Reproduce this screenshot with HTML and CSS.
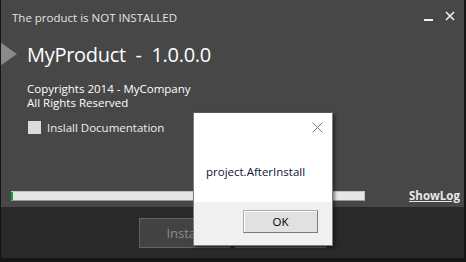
FILE: index.html
```html
<!DOCTYPE html>
<html lang="en">
<head>
    <meta charset="UTF-8">
    <title>MyProduct Setup</title>
    <link rel="stylesheet" href="styles.css">
</head>
<body>
    <div class="window">
        <!-- Main panel -->
        <div class="top">
            <div class="titlebar">
                <span class="title">The product is NOT INSTALLED</span>
                <div class="controls">
                    <span class="min"></span>
                    <svg class="close" width="10" height="10" viewBox="0 0 10 10">
                        <path d="M1 1L9 9M9 1L1 9" stroke="#f2f2f2" stroke-width="1.6"/>
                    </svg>
                </div>
            </div>

            <div class="product">
                <span class="arrow"></span>
                <h1>MyProduct  -  1.0.0.0</h1>
            </div>

            <div class="copy">
                <p>Copyrights 2014 - MyCompany</p>
                <p>All Rights Reserved</p>
            </div>

            <label class="check">
                <span class="box"></span>
                <span>Inslall Documentation</span>
            </label>

            <div class="progress-row">
                <div class="progress"><div class="progress-fill"></div></div>
                <a class="showlog" href="#">ShowLog</a>
            </div>
        </div>

        <!-- Buttons -->
        <div class="bottom">
            <button class="btn">Install</button>
            <button class="btn">Cancel</button>
        </div>

        <!-- Message box -->
        <div class="dialog">
            <div class="dialog-body">
                <svg class="dialog-close" width="11" height="11" viewBox="0 0 11 11">
                    <path d="M0.5 0.5L10.5 10.5M10.5 0.5L0.5 10.5" stroke="#7a7a7a" stroke-width="1"/>
                </svg>
                <p class="message">project.AfterInstall</p>
            </div>
            <div class="dialog-foot">
                <button class="ok">OK</button>
            </div>
        </div>
    </div>
</body>
</html>
```

FILE: styles.css
```css
/* General styles */
body {
    margin: 0;
    background-color: #151515;
    font-family: "Open Sans", "Noto Sans", sans-serif;
}
.window {
    position: relative;
    width: 463px;
    height: 258px;
    margin-left: 1px;
    display: flex;
    flex-direction: column;
    overflow: hidden;
}

/* Main panel */
.top {
    height: 207px;
    background-color: #474747;
    color: #ffffff;
    display: flex;
    flex-direction: column;
}
.titlebar {
    display: flex;
    justify-content: space-between;
    padding: 9px 9px 0 11px;
    height: 21px;
}
.title {
    font-size: 11.5px;
    color: #e4e4e4;
    line-height: 18px;
}
.controls {
    display: flex;
    align-items: flex-start;
    gap: 12px;
    padding-top: 2px;
}
.min {
    width: 9px;
    height: 2px;
    margin-top: 8px;
    background-color: #f2f2f2;
}
.product {
    display: flex;
    align-items: center;
    height: 26px;
    margin-top: 11px;
}
.arrow {
    width: 0;
    height: 0;
    margin-left: -1px;
    border-top: 12px solid transparent;
    border-bottom: 12px solid transparent;
    border-left: 17px solid #8a8a8a;
}
.product h1 {
    margin: 0 0 0 10px;
    font-size: 20px;
    font-weight: normal;
    white-space: pre;
    letter-spacing: -0.3px;
}
.copy {
    margin: 15px 0 0 26px;
    font-size: 11.5px;
    line-height: 14px;
}
.copy p {
    margin: 0;
}
.check {
    display: flex;
    align-items: center;
    margin: 10px 0 0 27px;
    font-size: 11.5px;
    color: #f0f0f0;
    gap: 6px;
}
.box {
    width: 13px;
    height: 13px;
    background-color: #dcdcdc;
}
.progress-row {
    display: flex;
    align-items: center;
    margin: auto 4px 4px 10px;
}
.progress {
    width: 353px;
    height: 8px;
    background-color: #e6e6e6;
    border: 1px solid #c2c2c2;
    border-bottom-color: #9a9a9a;
    border-left: none;
}
.progress-fill {
    width: 2px;
    height: 100%;
    background-color: #06b025;
}
.showlog {
    margin-left: auto;
    font-size: 11.5px;
    font-weight: bold;
    color: #e8e8e8;
    text-decoration: underline;
}

/* Bottom buttons */
.bottom {
    flex: 1;
    background-color: #292929;
    display: flex;
    justify-content: center;
    align-items: flex-start;
    gap: 5px;
    padding-top: 11px;
}
.btn {
    width: 91px;
    height: 30px;
    background-color: #434343;
    border: 1px solid #626262;
    color: #8c8c8c;
    font-family: "Open Sans", sans-serif;
    font-size: 13px;
}

/* Message box */
.dialog {
    position: absolute;
    left: 192px;
    top: 112px;
    width: 138px;
    height: 132px;
    border: 1px solid #7f7f7f;
    border-top-color: #5a5a5a;
    box-shadow: 2px 2px 3px rgba(0, 0, 0, 0.45);
    display: flex;
    flex-direction: column;
    font-family: "Open Sans", sans-serif;
}
.dialog-body {
    position: relative;
    height: 89px;
    background-color: #ffffff;
}
.dialog-close {
    position: absolute;
    right: 9px;
    top: 9px;
}
.message {
    margin: 51px 0 0 12px;
    font-size: 11.5px;
    color: #111133;
}
.dialog-foot {
    flex: 1;
    background-color: #f0f0f0;
    display: flex;
    justify-content: flex-end;
    align-items: flex-start;
    padding: 8px 14px 0 0;
}
.ok {
    width: 75px;
    height: 23px;
    background-color: #e1e1e1;
    border: 1px solid #adadad;
    border-right-color: #7a7a7a;
    border-bottom-color: #7a7a7a;
    box-shadow: inset 1px 1px 0 #ffffff;
    font-family: "Open Sans", sans-serif;
    font-size: 11.5px;
    color: #000000;
}
```
